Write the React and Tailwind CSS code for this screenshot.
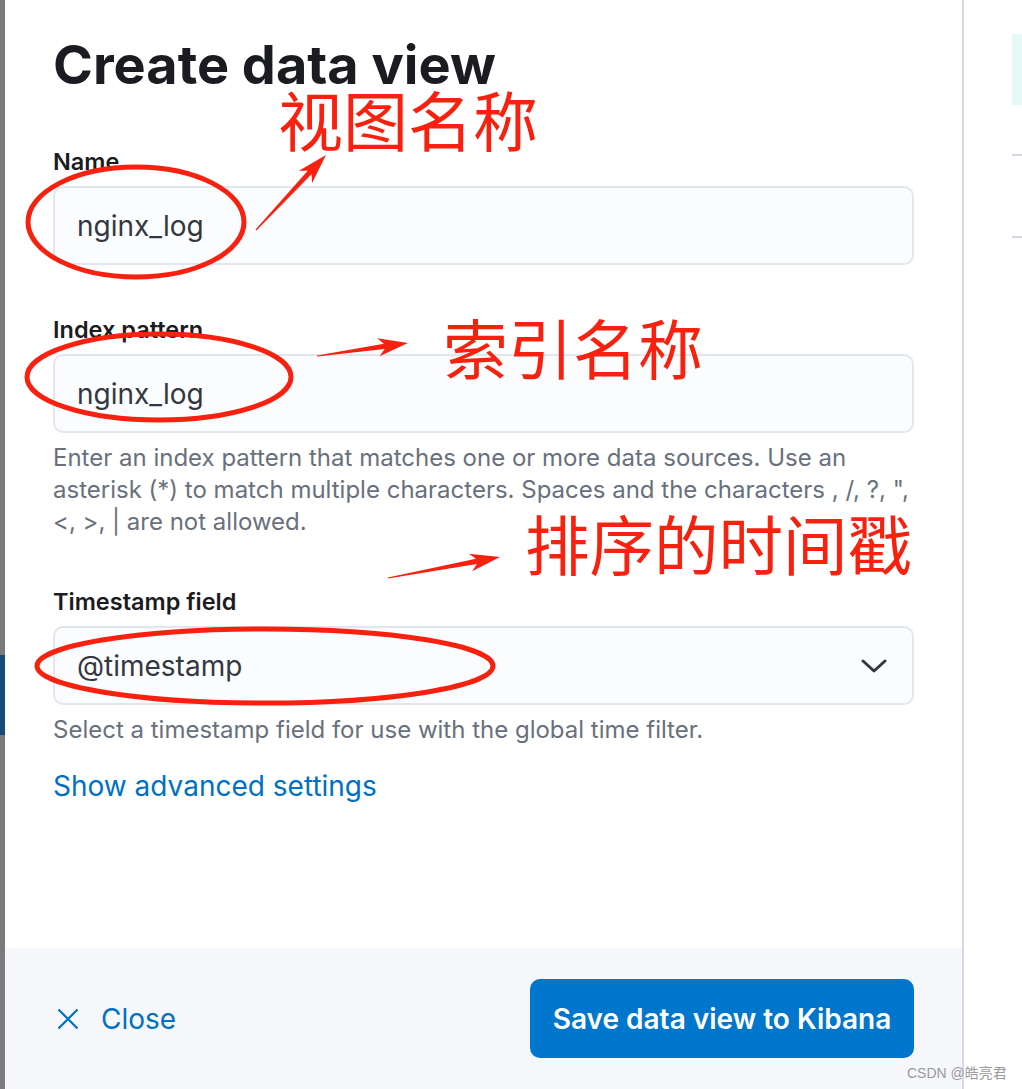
import React from 'react';

const red = '#f8210f';

// tapered arrow polygon from tail to tip
function arrowPoints(t, p) {
  const dx = p[0] - t[0];
  const dy = p[1] - t[1];
  const len = Math.hypot(dx, dy);
  const ux = dx / len;
  const uy = dy / len;
  const nx = -uy;
  const ny = ux;
  const h = 24;
  const b = [p[0] - ux * h, p[1] - uy * h];
  const back = [p[0] - ux * (h + 6), p[1] - uy * (h + 6)];
  const pt = (base, k) => `${base[0] + nx * k},${base[1] + ny * k}`;
  return [pt(t, 0.6), pt(b, 2.6), pt(back, 9), `${p[0]},${p[1]}`, pt(back, -9), pt(b, -2.6), pt(t, -0.6)].join(' ');
}

function Annotations() {
  return (
    <svg className="absolute inset-0 pointer-events-none" width="1022" height="1089" viewBox="0 0 1022 1089">
      <g fill="none" stroke={red} strokeWidth="5">
        <ellipse cx="136" cy="222" rx="108" ry="55" />
        <ellipse cx="159" cy="377" rx="132" ry="43" />
        <ellipse cx="265" cy="666" rx="228" ry="37" />
      </g>
      <g fill={red}>
        <polygon points={arrowPoints([256, 230], [326, 155])} />
        <polygon points={arrowPoints([317, 356], [408, 343])} />
        <polygon points={arrowPoints([388, 578], [500, 557])} />
      </g>
    </svg>
  );
}

function Field({ label, value, select }) {
  return (
    <div className="flex flex-col gap-[10px]">
      <label className="text-[23.5px] leading-[28px] font-semibold text-[#1a1c21]">{label}</label>
      <div className="h-[79px] rounded-[10px] border-2 border-[#e3e6ef] bg-[#fbfcfd] flex items-center justify-between pl-[22px] pr-[25px]">
        <span className="text-[28px] text-[#343741]">{value}</span>
        {select && (
          <svg width="26" height="14" viewBox="0 0 26 14" fill="none">
            <path d="M2 2 L13 12 L24 2" stroke="#343741" strokeWidth="3" strokeLinecap="round" strokeLinejoin="round" />
          </svg>
        )}
      </div>
    </div>
  );
}

export default function App() {
  return (
    <div className="relative w-[1022px] h-[1089px] overflow-hidden bg-white flex" style={{ fontFamily: 'Inter, "Noto Sans", sans-serif' }}>
      {/* page behind the flyout */}
      <div className="w-[5px] flex flex-col bg-[#7b7b7b]">
        <div className="h-[655px]" />
        <div className="h-[80px] bg-[#174a78]" />
      </div>

      {/* flyout */}
      <div className="w-[959px] flex flex-col border-r-2 border-[#d3dae6]">
        <div className="flex-1 px-[48px] pt-[34px] flex flex-col">
          <h1 className="text-[54px] leading-[62px] font-bold text-[#1a1c21]">Create data view</h1>

          <div className="mt-[52px]">
            <Field label="Name" value="nginx_log" />
          </div>

          <div className="mt-[51px]">
            <Field label="Index pattern" value="nginx_log" />
            <p className="mt-[9px] text-[24px] leading-[32px] text-[#69707d]">
              Enter an index pattern that matches one or more data sources. Use an asterisk (*) to match multiple characters. Spaces and the characters , /, ?, ", &lt;, &gt;, | are not allowed.
            </p>
          </div>

          <div className="mt-[50px]">
            <Field label="Timestamp field" value="@timestamp" select />
            <p className="mt-[9px] text-[24px] leading-[32px] text-[#69707d]">
              Select a timestamp field for use with the global time filter.
            </p>
          </div>

          <a className="mt-[22px] text-[28px] leading-[36px] text-[#0071c2] self-start">Show advanced settings</a>
        </div>

        <div className="h-[141px] bg-[#f5f7fa] flex items-center justify-between px-[48px]">
          <button className="flex items-center gap-[22px] pl-[4px] text-[#0071c2]">
            <svg width="22" height="22" viewBox="0 0 22 22" fill="none">
              <path d="M1.5 1.5 L20.5 20.5 M20.5 1.5 L1.5 20.5" stroke="#0071c2" strokeWidth="2.2" />
            </svg>
            <span className="text-[28px]">Close</span>
          </button>
          <button className="h-[79px] w-[384px] rounded-[10px] bg-[#0077cc] text-white text-[28px] font-semibold">
            Save data view to Kibana
          </button>
        </div>
      </div>

      {/* page to the right */}
      <div className="flex-1 pl-[48px] pt-[34px] flex flex-col">
        <div className="h-[71px] bg-[#e6f9f7]" />
        <div className="mt-[49px] h-[2px] bg-[#d3dae6]" />
        <div className="mt-[80px] h-[2px] bg-[#d3dae6]" />
      </div>

      <Annotations />

      <div className="absolute left-[278px] top-[86px] text-[65px] leading-none" style={{ color: red, fontFamily: '"Noto Sans CJK SC", sans-serif' }}>视图名称</div>
      <div className="absolute left-[443px] top-[314px] text-[65px] leading-none" style={{ color: red, fontFamily: '"Noto Sans CJK SC", sans-serif' }}>索引名称</div>
      <div className="absolute left-[525px] top-[510px] text-[64.5px] leading-none" style={{ color: red, fontFamily: '"Noto Sans CJK SC", sans-serif' }}>排序的时间戳</div>

      <div className="absolute left-[907px] top-[1063px] text-[14px] leading-[20px] text-[#9a9a9a]" style={{ fontFamily: '"Liberation Sans", "Noto Sans CJK SC", sans-serif' }}>CSDN @皓亮君</div>
    </div>
  );
}
